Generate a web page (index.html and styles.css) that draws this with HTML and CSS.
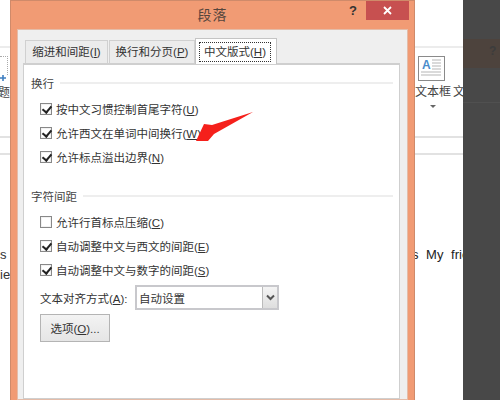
FILE: index.html
```html
<!DOCTYPE html>
<html lang="zh">
<head>
<meta charset="utf-8">
<title>段落</title>
<link rel="stylesheet" href="styles.css">
</head>
<body>
<div class="stage">
  <div class="doc">
    <div class="ribbon">
      <div class="ribbon-left">
        <div class="style-box"></div>
        <svg class="plus" width="6" height="6" viewBox="0 0 6 6"><path d="M3 0v6M0 3h6" stroke="#3f7fc1" stroke-width="1.6"/></svg>
        <span class="ribbon-label">题</span>
      </div>
      <div class="ribbon-right">
        <svg class="textbox-icon" width="27" height="25" viewBox="0 0 27 25">
          <rect x="0.5" y="0.5" width="26" height="24" fill="#fff" stroke="#8a8a8a"/>
          <text x="4" y="13" class="icon-a">A</text>
          <path d="M14 4h9M14 7h9M14 10h9M14 13h9M3 16h20M3 19h20" stroke="#b5b5b5" stroke-width="1" fill="none"/>
        </svg>
        <div class="ribbon-text"><span>文本框</span><span>文</span></div>
        <span class="caret"></span>
      </div>
    </div>
    <div class="ruler"></div>
    <div class="page">
      <div class="line"><span>s</span><span class="frag">s My frie</span></div>
      <div class="line"><span>ie</span></div>
    </div>
  </div>
  <aside class="dark">
    <div class="dark-band"><span>?</span></div>
    <div class="dark-line"></div>
  </aside>
  <section class="dialog">
    <header class="titlebar">
      <span></span>
      <h1>段落</h1>
      <div class="controls">
        <span class="help">?</span>
        <button class="close"><svg width="9" height="9" viewBox="0 0 9 9"><path d="M1 1l7 7M8 1l-7 7" stroke="#fff" stroke-width="1.8"/></svg></button>
      </div>
    </header>
    <div class="client">
      <nav class="tabs">
        <div class="tab t1">缩进和间距(<u>I</u>)</div>
        <div class="tab t2">换行和分页(<u>P</u>)</div>
        <div class="tab active"><span class="focus">中文版式(<u>H</u>)</span></div>
      </nav>
      <div class="panel">
        <div class="group-title"><span>换行</span><i></i></div>
        <div class="options">
          <label class="opt"><b class="box on"></b><span>按中文习惯控制首尾字符(<u>U</u>)</span></label>
          <label class="opt"><b class="box on"></b><span>允许西文在单词中间换行(<u>W</u>)</span></label>
          <label class="opt"><b class="box on"></b><span>允许标点溢出边界(<u>N</u>)</span></label>
        </div>
        <div class="group-title second"><span>字符间距</span><i></i></div>
        <div class="options tight">
          <label class="opt"><b class="box"></b><span>允许行首标点压缩(<u>C</u>)</span></label>
          <label class="opt"><b class="box on"></b><span>自动调整中文与西文的间距(<u>E</u>)</span></label>
          <label class="opt"><b class="box on"></b><span>自动调整中文与数字的间距(<u>S</u>)</span></label>
        </div>
        <div class="align-row">
          <span class="align-label">文本对齐方式(<u>A</u>):</span>
          <div class="select"><span class="value">自动设置</span><span class="drop"><svg width="9" height="7" viewBox="0 0 9 7"><path d="M1 1.5l3.5 3.5L8 1.5" fill="none" stroke="#555" stroke-width="2"/></svg></span></div>
        </div>
        <button class="options-btn">选项(<u>O</u>)...</button>
      </div>
    </div>
  </section>
  <svg class="arrow" width="66" height="38" viewBox="190 108 66 38"><path d="M253 112 L212 125 L204 124 L196 141 L208 141 L214 134 Z" fill="#f5201b"/></svg>
</div>
</body>
</html>
```
FILE: styles.css
```css
* { box-sizing: border-box; }
html, body { margin: 0; padding: 0; }
body { width: 500px; height: 400px; overflow: hidden; font-family: "Liberation Sans", "Noto Sans CJK SC", sans-serif; background: #fff; }
.stage { position: relative; width: 500px; height: 400px; overflow: hidden; display: flex; }
.doc { width: 463px; height: 400px; background: #fff; flex: none; overflow: hidden; }
.ribbon { height: 92px; margin-top: 46px; border-top: 2px solid #ececec; border-bottom: 2px solid #e2e2e2; display: flex; justify-content: space-between; }
.ribbon-left { width: 12px; padding-top: 8px; overflow: hidden; }
.style-box { width: 8px; height: 19px; border: 1px dotted #aaa; border-left: 0; border-bottom: 0; }
.plus { display: block; }
.ribbon-label { display: block; margin: 5px 0 0 -2px; font-size: 12px; line-height: 14px; color: #444; }
.ribbon-right { width: 48px; padding-top: 8px; overflow: hidden; }
.textbox-icon { display: block; margin-left: 3px; }
.icon-a { font: bold 12px "Liberation Sans", sans-serif; fill: #4a8ccb; }
.ribbon-text { display: flex; gap: 2px; font-size: 12px; line-height: 14px; color: #444; margin-top: 4px; white-space: nowrap; }
.caret { display: block; width: 0; height: 0; margin: 6px 0 0 15px; border: 3px solid transparent; border-top: 3px solid #666; }
.ruler { height: 17px; border-bottom: 2px solid #e2e2e2; }
.page { padding-top: 90px; font-size: 13px; line-height: 20px; color: #333; }
.line { display: flex; justify-content: space-between; white-space: nowrap; }
.frag { width: 51px; overflow: hidden; word-spacing: 4px; color: #222; }
.dark { flex: 1; background: #484848; }
.dark-band { height: 29px; margin-top: 39px; background: #4d433d; color: #3c3c3c; font: bold 12px/24px "Liberation Sans", sans-serif; padding-left: 26px; }
.dark-line { height: 1px; margin-top: 34px; background: #505050; }
.dialog { position: absolute; left: 10px; top: 0; width: 405px; height: 400px; background: #f19b74; border: 1px solid #cf8a6a; border-bottom: 0; padding: 0 6px; display: flex; flex-direction: column; }
.titlebar { height: 28px; flex: none; display: grid; grid-template-columns: 1fr auto 1fr; align-items: center; }
.titlebar h1 { margin: 0; font-size: 14px; line-height: 18px; font-weight: 400; letter-spacing: 1px; color: #55453c; }
.controls { display: flex; justify-content: flex-end; align-items: flex-start; gap: 9px; align-self: start; margin-right: -1px; }
.help { font: bold 13px/19px "Liberation Sans", sans-serif; color: #333; }
.close { width: 43px; height: 19px; border: 0; padding: 0; background: #c75050; display: flex; align-items: center; justify-content: center; }
.client { flex: 1; background: #efefef; border: 1px solid #e4bca8; padding: 8px 7px 0 5px; display: flex; flex-direction: column; min-height: 0; }
.tabs { display: flex; height: 25px; flex: none; padding-left: 2px; position: relative; z-index: 1; }
.tab { height: 23px; margin-top: 2px; background: #ececec; border: 1px solid #d0d0d0; border-bottom: 0; font-size: 11.5px; line-height: 22px; text-align: center; color: #333; white-space: nowrap; }
.t1 { width: 83px; margin-right: 1px; }
.t2 { width: 86px; }
.tab.active { width: 82px; height: 26px; margin-top: 0; background: #fff; border-color: #c4c4c4; padding: 3px 5px 0 3px; line-height: 18px; }
.focus { display: block; border: 1px dotted #333; line-height: 18px; height: 20px; }
.panel { flex: 1; background: #fff; border: 1px solid #cfcfcf; border-top-width: 2px; padding: 10px 6px 0 7px; font-size: 11.5px; color: #333; }
.group-title { display: flex; align-items: center; gap: 6px; height: 16px; color: #444; }
.group-title i { flex: 1; height: 2px; background: #eee; }
.group-title.second { margin-top: 22px; }
.options { margin: 9px 0 0 9px; display: flex; flex-direction: column; gap: 6px; }
.options.tight { margin-top: 9px; }
.opt { display: flex; align-items: center; gap: 4px; height: 18px; white-space: nowrap; }
.box { width: 12px; height: 12px; border: 1px solid #888; background: #fff; flex: none; position: relative; box-shadow: inset 0 0 0 1px #f2f2f2; }
.box.on::after { content: ""; position: absolute; left: 3px; top: 0; width: 4px; height: 7px; border: solid #222; border-width: 0 2px 2px 0; transform: rotate(40deg); }
.align-row { margin: 6px 0 0 9px; display: flex; align-items: center; height: 25px; }
.align-label { width: 95px; white-space: nowrap; }
.select { width: 144px; height: 25px; border: 2px solid #c8c8cc; display: flex; justify-content: space-between; align-items: center; background: #fff; }
.value { padding-left: 2px; }
.drop { width: 15px; height: 21px; background: linear-gradient(#f4f4f4, #dedede); border-left: 1px solid #bbb; display: flex; align-items: center; justify-content: center; }
.options-btn { display: block; margin: 4px 0 0 9px; width: 70px; height: 28px; padding: 0; font: inherit; color: #333; border: 1px solid #b4b4b4; background: linear-gradient(#f3f3f3, #e5e5e5); }
.arrow { position: absolute; left: 190px; top: 108px; }
```
